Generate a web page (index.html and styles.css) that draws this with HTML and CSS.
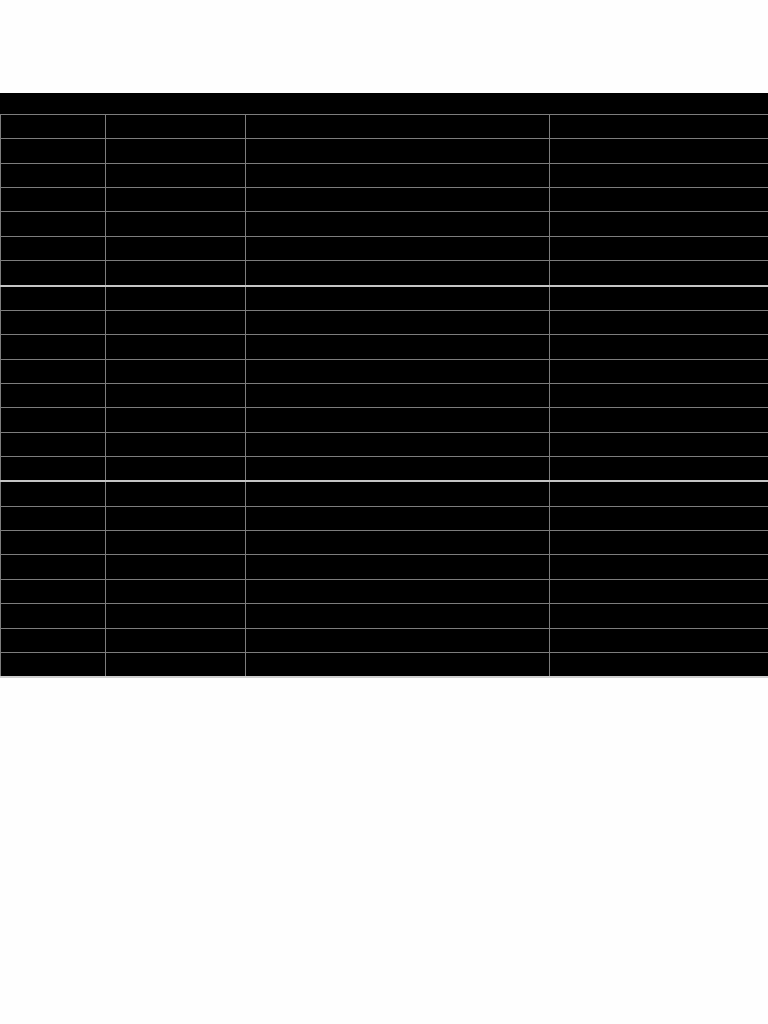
FILE: index.html
```html
<!DOCTYPE html>
<html>
<head>
<meta charset="utf-8">
<link rel="stylesheet" href="styles.css">
</head>
<body>
<div class="page">
<table class="grid">
<caption class="band"></caption>
<colgroup><col class="c1"><col class="c2"><col class="c3"><col class="c4"></colgroup>
<tbody class="sec">
<tr><td></td><td></td><td></td><td></td></tr>
<tr><td></td><td></td><td></td><td></td></tr>
<tr><td></td><td></td><td></td><td></td></tr>
<tr><td></td><td></td><td></td><td></td></tr>
<tr><td></td><td></td><td></td><td></td></tr>
<tr><td></td><td></td><td></td><td></td></tr>
<tr><td></td><td></td><td></td><td></td></tr>
</tbody>
<tbody class="sec sep">
<tr><td></td><td></td><td></td><td></td></tr>
<tr><td></td><td></td><td></td><td></td></tr>
<tr><td></td><td></td><td></td><td></td></tr>
<tr><td></td><td></td><td></td><td></td></tr>
<tr><td></td><td></td><td></td><td></td></tr>
<tr><td></td><td></td><td></td><td></td></tr>
<tr><td></td><td></td><td></td><td></td></tr>
<tr><td></td><td></td><td></td><td></td></tr>
</tbody>
<tbody class="sec sep last">
<tr><td></td><td></td><td></td><td></td></tr>
<tr><td></td><td></td><td></td><td></td></tr>
<tr><td></td><td></td><td></td><td></td></tr>
<tr><td></td><td></td><td></td><td></td></tr>
<tr><td></td><td></td><td></td><td></td></tr>
<tr><td></td><td></td><td></td><td></td></tr>
<tr><td></td><td></td><td></td><td></td></tr>
<tr><td></td><td></td><td></td><td></td></tr>
</tbody>
</table>
</div>
</body>
</html>
```
FILE: styles.css
```css
html, body {
  margin: 0;
  padding: 0;
  background: #fefefe;
  font-family: "Liberation Sans", Arial, sans-serif;
}
.page {
  padding-top: 93px;
}
.grid {
  border-collapse: collapse;
  table-layout: fixed;
  width: 770px;
  background: #000;
}
.band {
  height: 21px;
  background: #000;
  caption-side: top;
}
.c1 { width: 105px; }
.c2 { width: 140px; }
.c3 { width: 304px; }
.c4 { width: 221px; }
.grid td {
  height: 23.36px;
  padding: 0;
  border: 1px solid #7d7d7d;
  background: #000;
}
.sep tr:first-child td {
  border-top: 2px solid #c4c4c4;
}
.last tr:last-child td {
  border-bottom: 2px solid #cfcfcf;
}
```
